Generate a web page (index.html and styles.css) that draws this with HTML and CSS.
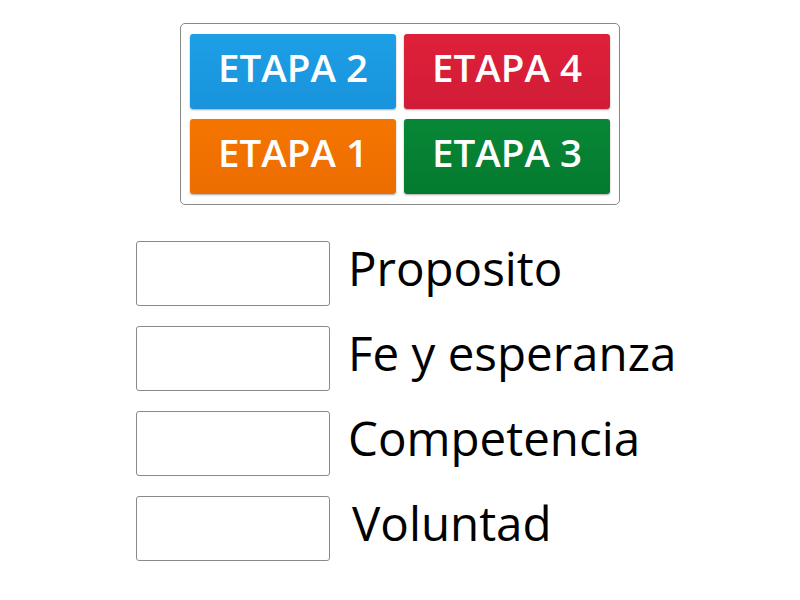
FILE: index.html
```html
<!DOCTYPE html>
<html lang="es">
<head>
<meta charset="utf-8">
<title>Etapas</title>
<link rel="stylesheet" href="styles.css">
</head>
<body>
<div class="page">
  <div class="board">
    <div class="tile tile-blue">ETAPA 2</div>
    <div class="tile tile-red">ETAPA 4</div>
    <div class="tile tile-orange">ETAPA 1</div>
    <div class="tile tile-green">ETAPA 3</div>
  </div>
  <div class="rows">
    <div class="row"><div class="slot"></div><div class="label">Proposito</div></div>
    <div class="row"><div class="slot"></div><div class="label">Fe y esperanza</div></div>
    <div class="row"><div class="slot"></div><div class="label">Competencia</div></div>
    <div class="row"><div class="slot"></div><div class="label label-v">Voluntad</div></div>
  </div>
</div>
</body>
</html>
```
FILE: styles.css
```css
html, body {
  margin: 0;
  padding: 0;
  background: #ffffff;
}
body {
  font-family: "Open Sans", "Noto Sans", sans-serif;
  width: 800px;
  height: 600px;
  overflow: hidden;
}
.page {
  display: flex;
  flex-direction: column;
  padding-top: 23px;
}
.board {
  align-self: center;
  display: grid;
  grid-template-columns: 206px 206px;
  grid-auto-rows: 75px;
  gap: 10px 8px;
  padding: 10px 9px;
  border: 1px solid #888888;
  border-radius: 5px;
}
.tile {
  display: flex;
  align-items: center;
  justify-content: center;
  color: #ffffff;
  font-weight: 600;
  font-size: 38.5px;
  border-radius: 3px;
  box-shadow: 0 1px 2px rgba(0, 0, 0, 0.35);
  padding-bottom: 10px;
  box-sizing: border-box;
}
.tile-blue { background: linear-gradient(#1d9fe6, #1893dc); }
.tile-red { background: linear-gradient(#df2039, #d11c37); }
.tile-orange { background: linear-gradient(#f57500, #ec6d00); }
.tile-green { background: linear-gradient(#078736, #047a2f); }
.rows {
  display: flex;
  flex-direction: column;
  gap: 20px;
  margin-top: 36px;
  margin-left: 136px;
}
.row {
  display: flex;
  align-items: center;
  gap: 18px;
}
.slot {
  width: 194px;
  height: 65px;
  box-sizing: border-box;
  border: 1px solid #8a8a8a;
  border-radius: 3px;
  background: #ffffff;
  flex: none;
}
.label {
  font-size: 47.5px;
  line-height: 1;
  color: #000000;
  padding-bottom: 11px;
}
.label-v {
  padding-left: 4px;
}
```
